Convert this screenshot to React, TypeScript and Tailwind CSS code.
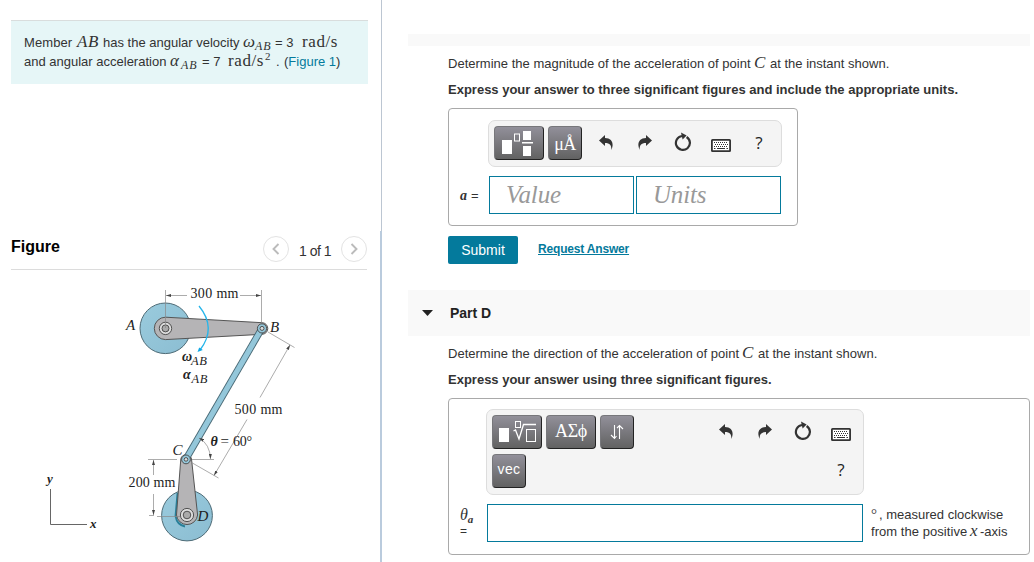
import React from 'react';

const serif = "font-['Liberation_Serif',serif]";
const toolButton =
  'flex h-[34px] shrink-0 items-center justify-center rounded-[4px] border border-t-[#77777b] border-l-[#77777b] border-r-[#222] border-b-[#222] bg-linear-to-b from-[#92909a] to-[#626262] text-white';

function UndoIcon({ flip = false }: { flip?: boolean }) {
  return (
    <svg width="14" height="15" viewBox="0 0 14 15" className={flip ? '-scale-x-100' : ''}>
      <path d="M0 5.5 L6 0 V3 C11 3 14 6 13.6 10.5 C13.5 12 13 13.5 12.2 15 C12.8 10.5 10.8 8 6 8 V11 Z" fill="#333" />
    </svg>
  );
}

function ResetIcon() {
  return (
    <svg width="18" height="20" viewBox="0 0 18 20">
      <path d="M12.6 5 A7 7 0 1 1 8 4" fill="none" stroke="#333" strokeWidth="2.2" />
      <path d="M7 0.5 L12.6 3.6 L8.6 7.6 Z" fill="#333" />
    </svg>
  );
}

function KeyboardIcon() {
  return (
    <svg width="20" height="13" viewBox="0 0 20 13">
      <rect x="0.9" y="0.9" width="18.2" height="11.2" rx="0.6" fill="#fff" stroke="#333" strokeWidth="1.8" />
      <path d="M3 3.5h14" stroke="#333" strokeDasharray="1 1" />
      <path d="M4 5.5h13" stroke="#333" strokeDasharray="1 1" />
      <path d="M3 7.5h14" stroke="#333" strokeDasharray="1 1" />
      <path d="M3 9.5h1.5M6 9.5h8M15.5 9.5H17" stroke="#333" />
    </svg>
  );
}

function Help() {
  return <div className="w-[38px] text-center font-['Open_Sans',sans-serif] text-[17px] leading-[32px] font-medium text-[#222]">?</div>;
}

function Icons({ help = false }: { help?: boolean }) {
  return (
    <>
      <div className="flex w-[38px] justify-center pb-0.5"><UndoIcon /></div>
      <div className="flex w-[39px] justify-center pb-0.5"><UndoIcon flip /></div>
      <div className="flex w-[38px] justify-center pb-0.5"><ResetIcon /></div>
      <div className="flex w-[38px] justify-center pt-1"><KeyboardIcon /></div>
      {help && <Help />}
    </>
  );
}

function Diagram() {
  return (
    <svg width="370" height="280" viewBox="0 270 370 280" className="block" fontFamily="Liberation Serif, serif" fill="#222">
      <defs>
        <marker id="dim" viewBox="0 0 5 3" refX="5" refY="1.5" markerWidth="5" markerHeight="3" orient="auto-start-reverse" markerUnits="userSpaceOnUse">
          <path d="M0 0 L5 1.5 L0 3 Z" fill="#444" />
        </marker>
        <linearGradient id="wheel" x1="0" y1="0" x2="1" y2="1">
          <stop offset="0" stopColor="#9acbdd" />
          <stop offset="1" stopColor="#8bbdd2" />
        </linearGradient>
      </defs>

      {/* Wheels */}
      <circle cx="165.3" cy="328.3" r="25.3" fill="url(#wheel)" stroke="#4e6b76" />
      <circle cx="187" cy="515.5" r="25.4" fill="url(#wheel)" stroke="#4e6b76" />

      {/* Link CD */}
      <path d="M177.5 493 L175.5 516 Q177 525 185 526.5" fill="none" stroke="#287f98" strokeWidth="1.8" />
      <path d="M180.8 459 A5.5 5.5 0 0 1 191.5 459 L197.6 515 A10.6 10.6 0 0 1 176.5 515 Z" fill="#b5b4b6" stroke="#555" />

      {/* Arm AB */}
      <path d="M165.5 317.2 L262 322.7 A5.8 5.8 0 0 1 262 334.3 L165.5 339.6 A11.2 11.2 0 0 1 165.5 317.2 Z" fill="#b5b4b6" stroke="#555" />

      {/* Rod BC */}
      <path d="M261.5 329 L186 459" stroke="#476773" strokeWidth="7" fill="none" />
      <path d="M261.5 329 L186 459" stroke="#94c7da" strokeWidth="5.2" fill="none" />

      {/* Pins */}
      <g stroke="#444" strokeWidth="0.9" fill="#ddd">
        <circle cx="165.5" cy="328.4" r="6.2" />
        <circle cx="165.5" cy="328.4" r="3.5" fill="#aaa" />
        <circle cx="187" cy="515" r="6.6" />
        <circle cx="187" cy="515" r="3.8" fill="#aaa" />
        <circle cx="262" cy="328.4" r="4.6" fill="#94c7da" />
        <circle cx="262" cy="328.4" r="2" />
        <circle cx="186" cy="459.4" r="4.4" fill="#94c7da" />
        <circle cx="186" cy="459.4" r="1.8" />
      </g>

      {/* Dimension lines */}
      <g stroke="#888" strokeWidth="0.7" fill="none">
        <path d="M165.5 290 V328 M261.5 290 V323" />
        <path d="M187 295.5 H166" markerEnd="url(#dim)" />
        <path d="M240 295.5 H261" markerEnd="url(#dim)" />
        <path d="M268 332 L294.5 347.5 M191.5 462.5 L218.5 478" />
        <path d="M260 397.5 L290 345" markerEnd="url(#dim)" />
        <path d="M247 419.5 L214 475.5" markerEnd="url(#dim)" />
        <path d="M148 459.5 H177 M192 459.5 H214 M149 515.5 H154 M157 516.5 H180" />
        <path d="M153.5 475 V460" markerEnd="url(#dim)" />
        <path d="M153.5 494 V515" markerEnd="url(#dim)" />
        <path d="M210.5 459 Q210 444 199 438" markerEnd="url(#dim)" markerStart="url(#dim)" />
      </g>
      <path d="M199 306 Q217 328 200 350" fill="none" stroke="#25b5ea" strokeWidth="1.3" />
      <path d="M197.5 352 L199.2 347.5 L202.8 350 Z" fill="#12a9e4" />

      {/* Labels */}
      <g fontSize="14">
        <text x="190.5" y="298" textLength="48">300 mm</text>
        <text x="234.5" y="414" textLength="48">500 mm</text>
        <text x="128.5" y="487" textLength="47">200 mm</text>
      </g>
      <g fontSize="15" fontStyle="italic">
        <text x="126" y="330">A</text>
        <text x="270" y="332">B</text>
        <text x="172.5" y="455">C</text>
        <text x="197.5" y="521">D</text>
        <text x="210.5" y="446" fontSize="14" fontWeight="bold">θ</text>
        <text x="182" y="361" fontSize="14" fontWeight="bold">ω</text>
        <text x="191" y="365" fontSize="12.5" textLength="16">AB</text>
        <text x="183" y="379" fontSize="14" fontWeight="bold">α</text>
        <text x="191.5" y="382.5" fontSize="12.5" textLength="16">AB</text>
      </g>
      <text x="220.5" y="446" fontSize="15">=</text>
      <text x="233" y="446" fontSize="14" textLength="19">60°</text>

      {/* Axes */}
      <path d="M50.5 489 V524.5 H87" stroke="#666" fill="none" />
      <text x="47" y="483" fontSize="13" fontStyle="italic" fontWeight="bold">y</text>
      <text x="90" y="528" fontSize="13" fontStyle="italic" fontWeight="bold">x</text>
    </svg>
  );
}

function LeftPanel() {
  return (
    <div className="flex w-[382px] shrink-0">
      <div className="w-[380px]">
        <div className="mt-5 ml-[11px] h-16 w-[357px] border-t border-[#d9dddd] bg-[#e6f6f7] pt-[11px] pl-[13px] leading-[19px]">
          <div className="flex h-[19px] items-baseline whitespace-pre">
            <span className="w-[53px] tracking-[0.1px]">Member</span>
            <span className={`w-[26px] text-[17px] tracking-[0.5px] italic ${serif}`}>AB</span>
            <span className="w-[140px]">has the angular velocity</span>
            <span className={`w-[12px] text-[17px] italic ${serif}`}>ω</span>
            <span className={`relative top-[3px] w-[20px] text-[12px] tracking-[0.8px] italic ${serif}`}>AB</span>
            <span className="w-[27px]">= 3</span>
            <span className={`text-[17px] tracking-[0.6px] ${serif}`}>rad/s</span>
          </div>
          <div className="flex h-[19px] items-baseline whitespace-pre">
            <span className="w-[146px]">and angular acceleration</span>
            <span className={`w-[11px] text-[17px] italic ${serif}`}>α</span>
            <span className={`relative top-[3px] w-[21px] text-[12px] tracking-[0.8px] italic ${serif}`}>AB</span>
            <span className="w-[26px]">= 7</span>
            <span className={`w-[37px] text-[17px] tracking-[0.6px] ${serif}`}>rad/s</span>
            <span className={`relative -top-[6px] w-[11px] text-[11px] leading-[8px] ${serif}`}>2</span>
            <span className="w-[8px]">.</span>
            <span>(<span className="text-[#047a9c]">Figure 1</span>)</span>
          </div>
        </div>

        <div className="mt-[147px] ml-[11px] flex h-[39px] w-[356px] items-start border-b border-[#dcdcdc] text-black">
          <h2 className="mt-[5px] w-[252px] text-[16px] leading-[22px] font-bold">Figure</h2>
          <div className="mt-[5px] flex size-[26px] items-center justify-center rounded-full border border-[#e3e3e3]">
            <svg width="8" height="12" viewBox="0 0 8 12" fill="none" stroke="#bbb" strokeWidth="1.9"><path d="M6.5 1 L1.5 6 L6.5 11" /></svg>
          </div>
          <span className="mt-[10px] w-[52px] text-center text-[14px] leading-5 tracking-[-0.5px] text-[#333]">1 of 1</span>
          <div className="mt-[5px] flex size-[26px] items-center justify-center rounded-full border border-[#e3e3e3]">
            <svg width="8" height="12" viewBox="0 0 8 12" fill="none" stroke="#bbb" strokeWidth="1.9"><path d="M1.5 1 L6.5 6 L1.5 11" /></svg>
          </div>
        </div>
        <Diagram />
      </div>
      <div className="flex w-[2px] flex-col items-end">
        <div className="h-[231px] w-px bg-[#bcc6d2]" />
        <div className="w-[2px] flex-1 bg-[#bacbdd]" />
      </div>
    </div>
  );
}

function PartC() {
  return (
    <div className="ml-[40px]">
      <p className="mt-[7px] flex h-[20px] items-baseline leading-5 whitespace-pre">
        <span className="w-[306px] tracking-[0.01px]">Determine the magnitude of the acceleration of point</span>
        <span className={`w-[16px] text-[17px] italic ${serif}`}>C</span>
        <span>at the instant shown.</span>
      </p>
      <p className="mt-[7px] leading-5 font-bold whitespace-pre">Express your answer to three significant figures and include the appropriate units.</p>

      <div className="mt-[8px] h-[118px] w-[350px] rounded-[4px] border border-[#a9a9a9] pt-[11px] pl-[11px]">
        <div className="ml-[28px] flex h-[47px] w-[294px] items-start rounded-[7px] border border-[#ddd] bg-[#f4f4f4] pt-[5px] pl-[5px]">
          <div className={`${toolButton} w-[50px]`}>
            <svg width="34" height="28" viewBox="0 0 34 28" className="-translate-x-[2px]">
              <path d="M2 11h10v14H2zM23 2h8v9h-8zM22 13h11v1.4H22zM23 17h8v10h-8z" fill="#fff" />
              <rect x="14.5" y="5" width="5" height="7" fill="none" stroke="#fff" />
            </svg>
          </div>
          <div className={`${toolButton} ml-1 w-[34px] pt-0.5 text-[18px] tracking-[-0.5px] ${serif}`}>μÅ</div>
          <div className="ml-[5px] flex h-[34px] items-center"><Icons help /></div>
        </div>
        <div className="mt-[9px] flex h-[38px] items-center">
          <div className="flex w-[29px] items-baseline">
            <span className={`w-[11px] text-[14px] font-bold italic ${serif}`}>a</span>
            <span>=</span>
          </div>
          <div className={`h-[38px] w-[145px] border border-[#047a9c] pl-[16px] text-[25px] leading-[36px] tracking-[-0.1px] text-[#999] italic ${serif}`}>Value</div>
          <div className={`ml-0.5 h-[38px] w-[145px] border border-[#047a9c] pl-[16px] text-[25px] leading-[36px] tracking-[-0.2px] text-[#999] italic ${serif}`}>Units</div>
        </div>
      </div>

      <div className="mt-[10px] flex h-[28px]">
        <button className="w-[70px] rounded-[2px] bg-[#047a9c] text-[14px] text-white">Submit</button>
        <a className="mt-[3px] ml-[20px] text-[12px] leading-5 font-bold tracking-[-0.18px] text-[#047a9c] underline">Request Answer</a>
      </div>
    </div>
  );
}

function PartD() {
  return (
    <div className="ml-[40px]">
      <p className="mt-[7px] flex h-[20px] items-baseline leading-5 whitespace-pre">
        <span className="w-[294px] tracking-[0.01px]">Determine the direction of the acceleration of point</span>
        <span className={`w-[16px] text-[17px] italic ${serif}`}>C</span>
        <span>at the instant shown.</span>
      </p>
      <p className="mt-[7px] leading-5 font-bold whitespace-pre">Express your answer using three significant figures.</p>

      <div className="mt-[8px] h-[157px] w-[582px] rounded-[4px] border border-[#a9a9a9] pt-[10px] pl-[11px]">
        <div className="ml-[26px] h-[86px] w-[378px] rounded-[7px] border border-[#ddd] bg-[#f4f4f4] pt-[5px] pl-[5px]">
          <div className="flex items-center">
            <div className={`${toolButton} w-[50px]`}>
              <svg width="40" height="24" viewBox="0 0 40 24" fill="none" stroke="#fff">
                <path d="M2 8h10v14H2z" fill="#fff" stroke="none" />
                <rect x="18.5" y="1.5" width="5" height="6" />
                <path d="M16.5 11 L18.5 10 L22 19 L26.5 4.5 H39" strokeWidth="1.3" />
                <rect x="29.5" y="9.5" width="9" height="12" />
              </svg>
            </div>
            <div className={`${toolButton} ml-1 w-[50px] pb-0.5 text-[18px] tracking-[-0.3px] ${serif}`}>ΑΣϕ</div>
            <div className={`${toolButton} ml-1 w-[34px]`}>
              <svg width="14" height="18" viewBox="0 0 14 18" fill="none" stroke="#fff" strokeWidth="1.1">
                <path d="M4.5 2 V15 M1 12 L4.5 15.5 L6.5 13 M9.5 16 V3 M7 5 L9.5 2.5 L13 6" />
              </svg>
            </div>
            <div className="ml-[73px] flex items-center"><Icons /></div>
          </div>
          <div className="mt-[5px] flex">
            <div className={`${toolButton} w-[34px] pb-[3px] text-[14px] tracking-[0.4px]`}>vec</div>
            <div className="ml-[296px]"><Help /></div>
          </div>
        </div>
        <div className="mt-[9px] flex h-[38px]">
          <div className="w-[27px] pt-[2px] leading-[17px]">
            <div className={`flex h-[17px] items-baseline text-[16px] italic ${serif}`}>θ<span className="relative top-[3px] text-[11px] font-bold">a</span></div>
            <div className="text-[12px]">=</div>
          </div>
          <div className="h-[38px] w-[376px] border border-[#047a9c]" />
          <div className="ml-[8px] pt-[2px] leading-[17px] whitespace-pre">
            <div className="flex h-[17px] items-baseline">
              <span className={`w-[8px] text-[15px] ${serif}`}>°</span>
              <span>, measured clockwise</span>
            </div>
            <div className="flex h-[17px] items-baseline">
              <span className="w-[99px] tracking-[0.05px]">from the positive</span>
              <span className={`w-[10px] text-[17px] leading-[15px] italic ${serif}`}>x</span>
              <span>-axis</span>
            </div>
          </div>
        </div>
      </div>
    </div>
  );
}

export default function App() {
  return (
    <div className="flex h-[562px] w-[1034px] overflow-hidden bg-white font-['Liberation_Sans',Arial,sans-serif] text-[13px] text-[#333]">
      <LeftPanel />
      <div className="ml-[26px] w-[622px] pt-[34px]">
        <div className="h-[12px] bg-[#f9f9f9]" />
        <PartC />
        <div className="mt-[26px] flex h-[46px] items-center bg-[#f9f9f9]">
          <svg width="11" height="6" viewBox="0 0 11 6" className="ml-[14px]"><path d="M0 0h11L5.5 6z" fill="#222" /></svg>
          <h2 className="ml-[17px] text-[14px] font-bold text-[#222]">Part D</h2>
        </div>
        <PartD />
      </div>
    </div>
  );
}
